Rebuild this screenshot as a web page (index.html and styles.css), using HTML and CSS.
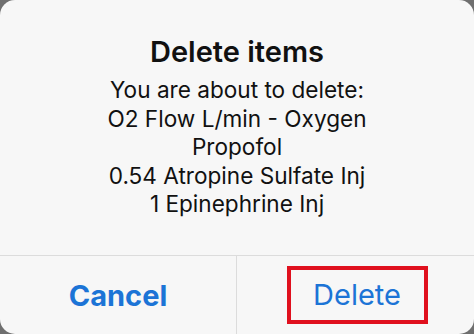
FILE: index.html
```html
<!DOCTYPE html>
<html>
<head>
<meta charset="utf-8">
<link rel="stylesheet" href="styles.css">
</head>
<body>
<div class="dialog">
  <div class="content">
    <h1 class="title">Delete items</h1>
    <p class="message">You are about to delete:<br>O2 Flow L/min - Oxygen<br>Propofol<br>0.54 Atropine Sulfate Inj<br>1 Epinephrine Inj</p>
  </div>
  <div class="actions">
    <div class="action cancel">Cancel</div>
    <div class="action delete"><span class="highlight">Delete</span></div>
  </div>
</div>
</body>
</html>
```
FILE: styles.css
```css
html, body {
  margin: 0;
  padding: 0;
  width: 474px;
  height: 334px;
  overflow: hidden;
  background: #6f6f6f;
}
.dialog {
  width: 474px;
  height: 334px;
  background: #f7f7f7;
  border-radius: 15px;
  display: flex;
  flex-direction: column;
  font-family: Inter, "Liberation Sans", sans-serif;
  color: #111;
}
.content {
  flex: 1;
  padding-top: 35px;
  text-align: center;
}
.title {
  margin: 0;
  font-size: 29px;
  line-height: 34px;
  font-weight: 600;
}
.message {
  margin: 7px 0 0;
  font-size: 22.6px;
  line-height: 28.6px;
  font-weight: 400;
}
.actions {
  height: 78px;
  border-top: 1px solid #dcdcdc;
  display: grid;
  grid-template-columns: 237px 1fr;
}
.action {
  display: flex;
  align-items: center;
  justify-content: center;
  font-size: 29px;
  color: #1c74d6;
}
.cancel {
  font-weight: 700;
  border-right: 1px solid #dcdcdc;
}
.delete {
  font-weight: 400;
}
.highlight {
  display: inline-block;
  border: 4px solid #e0101e;
  padding: 8px 23px 8px 22px;
  line-height: 34px;
  margin-left: 4px;
}
```
